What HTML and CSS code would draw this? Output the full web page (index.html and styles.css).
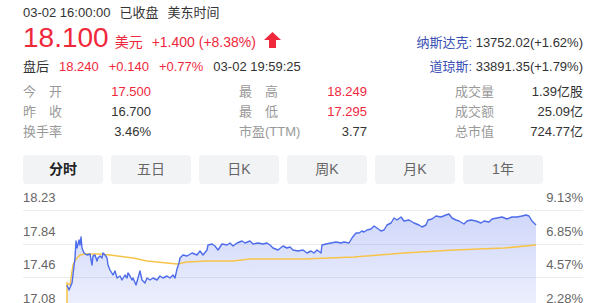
FILE: index.html
```html
<!DOCTYPE html>
<html lang="zh-CN">

<head>
    <meta charset="UTF-8">
    <meta name="viewport" content="width=device-width, initial-scale=1.0">
    <title>行情</title>
    <link rel="stylesheet" href="styles.css">
</head>

<body>
    <div class="quote">
        <div class="status">
            <span>03-02 16:00:00</span>
            <span>已收盘</span>
            <span>美东时间</span>
        </div>

        <div class="line-price">
            <div class="price-box">
                <span class="price">18.100</span>
                <span class="unit">美元</span>
                <span class="change">+1.400 (+8.38%)</span>
                <svg class="arrow" width="17" height="16" viewBox="0 0 17 16">
                    <path d="M8.5 0 L17 8 L12 8 L12 16 L5 16 L5 8 L0 8 Z" fill="#f0283c" />
                </svg>
            </div>
            <div class="index"><span class="index-name">纳斯达克:</span> 13752.02(+1.62%)</div>
        </div>

        <div class="line-after">
            <div class="after">
                <span>盘后</span>
                <span class="red">18.240</span>
                <span class="red">+0.140</span>
                <span class="red">+0.77%</span>
                <span>03-02 19:59:25</span>
            </div>
            <div class="index"><span class="index-name">道琼斯:</span> 33891.35(+1.79%)</div>
        </div>

        <div class="stats">
            <div class="cell"><span class="label">今　开</span><span class="red">17.500</span></div>
            <div class="cell"><span class="label">最　高</span><span class="red">18.249</span></div>
            <div class="cell"><span class="label">成交量</span><span>1.39亿股</span></div>
            <div class="cell"><span class="label">昨　收</span><span>16.700</span></div>
            <div class="cell"><span class="label">最　低</span><span class="red">17.295</span></div>
            <div class="cell"><span class="label">成交额</span><span>25.09亿</span></div>
            <div class="cell"><span class="label">换手率</span><span>3.46%</span></div>
            <div class="cell"><span class="label">市盈(TTM)</span><span>3.77</span></div>
            <div class="cell"><span class="label">总市值</span><span>724.77亿</span></div>
        </div>

        <div class="tabs">
            <span class="tab active">分时</span>
            <span class="tab">五日</span>
            <span class="tab">日K</span>
            <span class="tab">周K</span>
            <span class="tab">月K</span>
            <span class="tab">1年</span>
        </div>

        <div class="chart">
            <div class="row r1"><span>18.23</span><span>9.13%</span></div>
            <div class="row r2"><span>17.84</span><span>6.85%</span></div>
            <div class="row r3"><span>17.46</span><span>4.57%</span></div>
            <div class="row r4"><span>17.08</span><span>2.28%</span></div>

            <svg class="plot" width="560" height="130" viewBox="23 187 560 130">
                <defs>
                    <linearGradient id="fill" x1="0" y1="0" x2="0" y2="1">
                        <stop offset="0" stop-color="#5a72ec" stop-opacity="0.28" />
                        <stop offset="1" stop-color="#5a72ec" stop-opacity="0.08" />
                    </linearGradient>
                </defs>
                <path id="area" fill="url(#fill)" d="" />
                <polyline id="avg" fill="none" stroke="#f7c449" stroke-width="1.5" points="" />
                <polyline id="line" fill="none" stroke="#4d6cec" stroke-width="1.4" stroke-linejoin="round" points="" />
            </svg>
        </div>
    </div>

    <script>
        // 分时价格 (页面坐标)
        var price = '67,282 69,287 72,280 75,255 76,238 77,245 79,237 80,242 81,234 82,245 84,250 87,252 90,251 92,262 93,253 95,252 97,258 98,255 100,253 102,255 103,250 105,252 107,255 108,262 110,267 113,272 115,268 117,275 120,273 122,277 125,272 127,275 128,270 130,273 132,277 133,275 136,282 138,275 140,268 142,277 143,278 145,280 147,275 150,277 153,275 157,277 160,273 163,275 167,273 170,275 173,272 175,275 177,266 179,260 180,255 183,252 187,253 192,250 197,252 200,248 203,252 207,247 208,242 212,241 215,243 218,247 222,241 227,242 230,240 233,243 237,240 242,238 245,240 250,238 253,241 258,240 263,241 267,240 270,242 273,245 278,247 283,243 287,245 290,244 293,247 298,248 303,247 307,250 311,248 314,250 317,247 321,250 322,242 326,241 331,240 336,239 341,240 344,239 349,240 352,235 356,230 359,230 362,228 364,229 367,227 371,226 374,223 377,225 381,228 384,227 387,222 391,220 394,215 397,217 401,214 404,218 409,217 414,220 419,222 422,224 426,222 428,217 432,216 436,213 441,214 446,212 449,211 452,215 456,217 459,218 464,221 467,218 471,217 476,218 481,220 484,218 489,219 492,216 497,215 502,214 507,216 512,214 517,214 522,213 526,212 529,213 532,218 536,222';
        // 均价
        var avg = '67,320 67,280 70,282 73,262 76,256 80,252 85,251 100,251 110,252 133,255 147,258 167,260 177,261 187,259 207,258 233,258 250,256 304,256 354,254 404,250 454,247 504,245 536,242';

        document.getElementById('line').setAttribute('points', price);
        document.getElementById('avg').setAttribute('points', avg);
        document.getElementById('area').setAttribute('d', 'M67,320 L' + price.split(' ').join(' L') + ' L536,320 Z');
    </script>
</body>

</html>
```

FILE: styles.css
```css
html,
body {
    margin: 0;
    overflow: hidden;
}

body {
    font-family: "Liberation Sans", "Noto Sans CJK SC", sans-serif;
    font-size: 13px;
    color: #333;
    background: #fff;
}

.quote {
    padding: 3px 25px 0 23px;
}

.red {
    color: #f0283c;
}

.status {
    display: flex;
    gap: 9px;
    line-height: 20px;
}

.line-price,
.line-after {
    display: flex;
    justify-content: space-between;
    align-items: baseline;
}

.price-box {
    display: flex;
    align-items: baseline;
    line-height: 30px;
    color: #f0283c;
}

.price {
    font-size: 28px;
}

.unit {
    font-size: 14px;
    margin-left: 6px;
}

.change {
    font-size: 14px;
    margin-left: 9px;
}

.arrow {
    margin-left: 8px;
    align-self: center;
}

.index {
    line-height: 20px;
}

.index-name {
    color: #3a4fb4;
}

.line-after {
    line-height: 20px;
}

.after {
    display: flex;
    gap: 10px;
}

.stats {
    display: grid;
    grid-template-columns: repeat(3, 128px);
    column-gap: 88px;
    margin-top: 5px;
    line-height: 20px;
}

.cell {
    display: flex;
    justify-content: space-between;
}

.label {
    color: #999;
}

.tabs {
    display: flex;
    gap: 8px;
    margin-top: 13px;
}

.tab {
    width: 80px;
    height: 29px;
    line-height: 29px;
    text-align: center;
    font-size: 14px;
    color: #666;
    background: #f2f3f5;
    border-radius: 4px;
}

.tab.active {
    color: #222;
    font-weight: bold;
}

.chart {
    position: relative;
    margin-top: 6px;
    color: #666;
}

.row {
    box-sizing: border-box;
    display: flex;
    justify-content: space-between;
    align-items: flex-end;
    border-bottom: 1px solid #ececec;
    line-height: 16px;
    padding-bottom: 4px;
}

.r1 {
    height: 21px;
}

.r2 {
    height: 34px;
}

.r3 {
    height: 33px;
}

.r4 {
    height: 34px;
}

.plot {
    position: absolute;
    left: 0;
    top: 0;
}
```
